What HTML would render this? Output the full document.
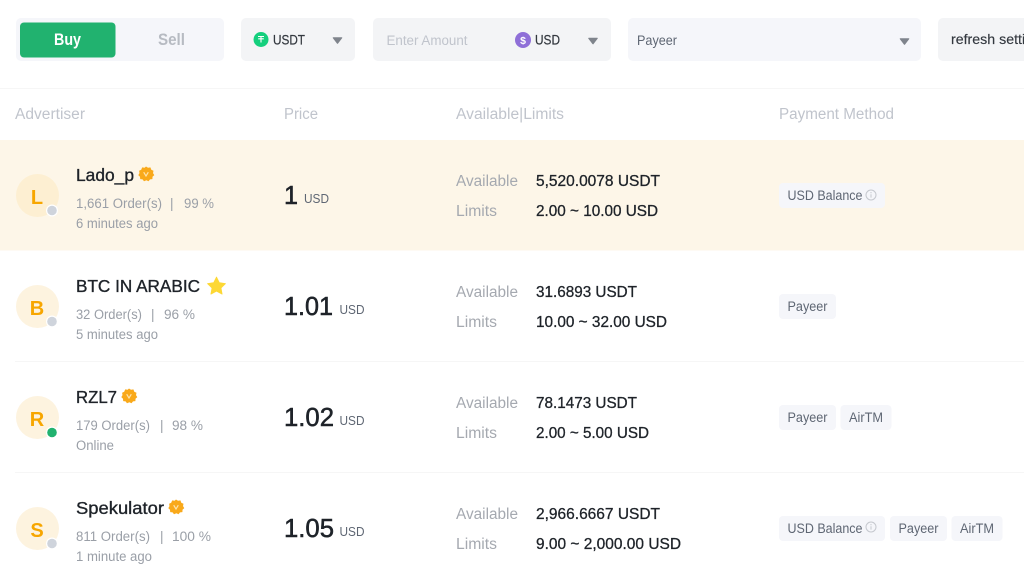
<!DOCTYPE html>
<html><head><meta charset="utf-8"><style>
html,body{margin:0;padding:0;width:1024px;height:574px;overflow:hidden;background:#fff}
svg{display:block;font-family:"Liberation Sans",sans-serif}
.h{fill:#c0c4cc;font-size:15.500px}.t{fill:#5e6673;font-size:13.500px}
.n{font-size:17.500px;fill:#1e2329;stroke:#1e2329;stroke-width:.35}.s{font-size:13.500px;fill:#9a9fa7}.a{font-size:20px;font-weight:bold;fill:#f7a600;text-anchor:middle}
.l{font-size:15.500px;fill:#a5a9b0}.v{font-size:15.500px;fill:#1e2329;stroke:#1e2329;stroke-width:.3}.p{font-size:26px;fill:#1e2329;stroke:#1e2329;stroke-width:.55}.u{font-size:12.500px;fill:#5e6673}
.c{fill:#f5f6fa}
</style></head><body>
<svg width="1024" height="574" viewBox="0 0 1024 574" xmlns="http://www.w3.org/2000/svg">
<defs>
<g id="ar"><path d="M.8 .8h8.400l-4.200 5.400z" fill="#7f848c" stroke="#7f848c" stroke-width="1.200" stroke-linejoin="round"/></g>
<g id="bd"><path d="M0-7.500l2 1.300 2.400-.4.900 2.300 2.200 1-.5 2.400 1.300 2-1.800 1.600-.1 2.400-2.400.3-1.500 1.900-2.100-1-2.400 1-1.400-1.900-2.400-.3-.2-2.400-1.700-1.600 1.200-2-.4-2.400 2.100-1 1-2.300 2.400.4z" fill="#f9a91a"/><path d="M-2.300-1.800L0 2l2.300-3.800" fill="none" stroke="#fde3ad" stroke-width="1.200"/></g>
<g id="inf"><circle r="5" fill="none" stroke="#c5c8ce" stroke-width="1"/><path d="M0-.8v3.400M0-3v1.200" stroke="#c5c8ce" stroke-width="1"/></g>
</defs>
<rect x="16" y="18" width="208" height="43" rx="5" fill="#f5f6fa"/>
<rect x="20" y="22.500" width="95.500" height="35" rx="4" fill="#21b26f"/>
<text x="54" y="45" font-size="16.500" font-weight="bold" fill="#fff" textLength="27" lengthAdjust="spacingAndGlyphs">Buy</text>
<text x="158" y="45" font-size="16.500" font-weight="bold" fill="#b7bbc2" textLength="27" lengthAdjust="spacingAndGlyphs">Sell</text>
<rect x="241" y="18" width="114" height="43" rx="5" fill="#f3f4f6"/>
<circle cx="261" cy="39.500" r="7.500" fill="#14cf7d"/>
<path d="M258 36.500h6M261 36.500v6M258.200 38.800h5.600" stroke="#fff" stroke-width="1.100" fill="none"/>
<text x="273" y="44.500" font-size="14" fill="#33383f" stroke="#33383f" stroke-width=".2" textLength="32" lengthAdjust="spacingAndGlyphs">USDT</text>
<use href="#ar" x="332.500" y="37"/>
<rect x="373" y="18" width="238" height="43" rx="5" fill="#f3f4f6"/>
<text x="386.500" y="45" font-size="13.500" fill="#c0c4cc" textLength="81" lengthAdjust="spacingAndGlyphs">Enter Amount</text>
<circle cx="523" cy="40" r="8" fill="#8f6fd8"/>
<text x="523" y="44" font-size="10.500" font-weight="bold" fill="#fff" text-anchor="middle">$</text>
<text x="535" y="44.500" font-size="14" fill="#33383f" stroke="#33383f" stroke-width=".2" textLength="25" lengthAdjust="spacingAndGlyphs">USD</text>
<use href="#ar" x="588" y="37.500"/>
<rect x="628" y="18" width="293" height="43" rx="5" fill="#f5f6fa"/>
<text x="637" y="45" font-size="14" fill="#5e6673" textLength="40" lengthAdjust="spacingAndGlyphs">Payeer</text>
<use href="#ar" x="899.500" y="38"/>
<rect x="938" y="18" width="100" height="43" rx="5" fill="#f3f4f6"/>
<text x="951" y="44" font-size="14" fill="#33383f" stroke="#33383f" stroke-width=".15" textLength="97" lengthAdjust="spacingAndGlyphs">refresh settings</text>
<rect x="0" y="88" width="1024" height="1" fill="#f6f6f6"/>
<text class="h" x="15" y="119" textLength="70" lengthAdjust="spacingAndGlyphs">Advertiser</text>
<text class="h" x="284" y="119" textLength="34" lengthAdjust="spacingAndGlyphs">Price</text>
<text class="h" x="456" y="119" textLength="108" lengthAdjust="spacingAndGlyphs">Available|Limits</text>
<text class="h" x="779" y="119" textLength="115" lengthAdjust="spacingAndGlyphs">Payment Method</text>

<rect x="0" y="140" width="1024" height="110.500" fill="#fdf6e8"/>
<rect x="15" y="361" width="1009" height="1" fill="#f6f6f6"/>
<rect x="15" y="472" width="1009" height="1" fill="#f6f6f6"/>

<!-- Row 1 -->
<circle cx="37.500" cy="195.500" r="21.500" fill="#fdefd2"/>
<text class="a" x="37" y="204">L</text>
<circle cx="52" cy="210.500" r="6" fill="#fff"/><circle cx="52" cy="210.500" r="4.800" fill="#cfd4dc"/>
<text class="n" x="76" y="181" textLength="58" lengthAdjust="spacingAndGlyphs">Lado_p</text>
<use href="#bd" x="146" y="174"/>
<text class="s" x="76" y="208" textLength="86" lengthAdjust="spacingAndGlyphs">1,661 Order(s)</text>
<text class="s" x="170" y="208">|</text>
<text class="s" x="184" y="208" textLength="30" lengthAdjust="spacingAndGlyphs">99 %</text>
<text class="s" x="76" y="228" textLength="82" lengthAdjust="spacingAndGlyphs">6 minutes ago</text>
<text class="p" x="284" y="204" textLength="14" lengthAdjust="spacingAndGlyphs">1</text>
<text class="u" x="304" y="203" textLength="25" lengthAdjust="spacingAndGlyphs">USD</text>
<text class="l" x="456" y="186" textLength="62" lengthAdjust="spacingAndGlyphs">Available</text>
<text class="v" x="536" y="186" textLength="124" lengthAdjust="spacingAndGlyphs">5,520.0078 USDT</text>
<text class="l" x="456" y="216" textLength="41" lengthAdjust="spacingAndGlyphs">Limits</text>
<text class="v" x="536" y="216" textLength="122" lengthAdjust="spacingAndGlyphs">2.00 ~ 10.00 USD</text>
<rect x="779" y="183" width="106" height="25" rx="4" class="c"/>
<text class="t" x="787.500" y="200" textLength="75" lengthAdjust="spacingAndGlyphs">USD Balance</text>
<use href="#inf" x="871" y="195"/>

<!-- Row 2 -->
<circle cx="37.500" cy="306.500" r="21.500" fill="#fdf3df"/>
<text class="a" x="37" y="315">B</text>
<circle cx="52" cy="321.500" r="6" fill="#fff"/><circle cx="52" cy="321.500" r="4.800" fill="#cfd4dc"/>
<text class="n" x="76" y="292" textLength="124" lengthAdjust="spacingAndGlyphs">BTC IN ARABIC</text>
<path d="M216.500 277l2.800 5.700 6.200.9-4.500 4.300 1.100 6.200-5.600-2.900-5.600 2.900 1.100-6.200-4.500-4.300 6.200-.9z" fill="#fdd835" stroke="#fdd835" stroke-width=".8" stroke-linejoin="round"/>
<text class="s" x="76" y="319" textLength="66" lengthAdjust="spacingAndGlyphs">32 Order(s)</text>
<text class="s" x="151" y="319">|</text>
<text class="s" x="164" y="319" textLength="31" lengthAdjust="spacingAndGlyphs">96 %</text>
<text class="s" x="76" y="339" textLength="82" lengthAdjust="spacingAndGlyphs">5 minutes ago</text>
<text class="p" x="284" y="315" textLength="49" lengthAdjust="spacingAndGlyphs">1.01</text>
<text class="u" x="339.500" y="314" textLength="25" lengthAdjust="spacingAndGlyphs">USD</text>
<text class="l" x="456" y="297" textLength="62" lengthAdjust="spacingAndGlyphs">Available</text>
<text class="v" x="536" y="297" textLength="101" lengthAdjust="spacingAndGlyphs">31.6893 USDT</text>
<text class="l" x="456" y="327" textLength="41" lengthAdjust="spacingAndGlyphs">Limits</text>
<text class="v" x="536" y="327" textLength="131" lengthAdjust="spacingAndGlyphs">10.00 ~ 32.00 USD</text>
<rect x="779" y="294" width="57" height="25" rx="4" class="c"/>
<text class="t" x="787.500" y="311" textLength="40" lengthAdjust="spacingAndGlyphs">Payeer</text>

<!-- Row 3 -->
<circle cx="37.500" cy="417.500" r="21.500" fill="#fdf3df"/>
<text class="a" x="37" y="426">R</text>
<circle cx="52" cy="432.500" r="6" fill="#fff"/><circle cx="52" cy="432.500" r="4.800" fill="#21b26f"/>
<text class="n" x="76" y="403" textLength="41" lengthAdjust="spacingAndGlyphs">RZL7</text>
<use href="#bd" x="129" y="396"/>
<text class="s" x="76" y="430" textLength="74" lengthAdjust="spacingAndGlyphs">179 Order(s)</text>
<text class="s" x="160" y="430">|</text>
<text class="s" x="172" y="430" textLength="31" lengthAdjust="spacingAndGlyphs">98 %</text>
<text class="s" x="76" y="450" textLength="38" lengthAdjust="spacingAndGlyphs">Online</text>
<text class="p" x="284" y="426" textLength="50" lengthAdjust="spacingAndGlyphs">1.02</text>
<text class="u" x="339.500" y="425" textLength="25" lengthAdjust="spacingAndGlyphs">USD</text>
<text class="l" x="456" y="408" textLength="62" lengthAdjust="spacingAndGlyphs">Available</text>
<text class="v" x="536" y="408" textLength="101" lengthAdjust="spacingAndGlyphs">78.1473 USDT</text>
<text class="l" x="456" y="438" textLength="41" lengthAdjust="spacingAndGlyphs">Limits</text>
<text class="v" x="536" y="438" textLength="113" lengthAdjust="spacingAndGlyphs">2.00 ~ 5.00 USD</text>
<rect x="779" y="405" width="57" height="25" rx="4" class="c"/>
<text class="t" x="787.500" y="422" textLength="40" lengthAdjust="spacingAndGlyphs">Payeer</text>
<rect x="840.500" y="405" width="51" height="25" rx="4" class="c"/>
<text class="t" x="849" y="422" textLength="34" lengthAdjust="spacingAndGlyphs">AirTM</text>

<!-- Row 4 -->
<circle cx="37.500" cy="528.500" r="21.500" fill="#fdf3df"/>
<text class="a" x="37" y="537">S</text>
<circle cx="52" cy="543.500" r="6" fill="#fff"/><circle cx="52" cy="543.500" r="4.800" fill="#cfd4dc"/>
<text class="n" x="76" y="514" textLength="88" lengthAdjust="spacingAndGlyphs">Spekulator</text>
<use href="#bd" x="176" y="507"/>
<text class="s" x="76" y="541" textLength="74" lengthAdjust="spacingAndGlyphs">811 Order(s)</text>
<text class="s" x="160" y="541">|</text>
<text class="s" x="172" y="541" textLength="39" lengthAdjust="spacingAndGlyphs">100 %</text>
<text class="s" x="76" y="561" textLength="76" lengthAdjust="spacingAndGlyphs">1 minute ago</text>
<text class="p" x="284" y="537" textLength="50" lengthAdjust="spacingAndGlyphs">1.05</text>
<text class="u" x="339.500" y="536" textLength="25" lengthAdjust="spacingAndGlyphs">USD</text>
<text class="l" x="456" y="519" textLength="62" lengthAdjust="spacingAndGlyphs">Available</text>
<text class="v" x="536" y="519" textLength="124" lengthAdjust="spacingAndGlyphs">2,966.6667 USDT</text>
<text class="l" x="456" y="549" textLength="41" lengthAdjust="spacingAndGlyphs">Limits</text>
<text class="v" x="536" y="549" textLength="145" lengthAdjust="spacingAndGlyphs">9.00 ~ 2,000.00 USD</text>
<rect x="779" y="516" width="106" height="25" rx="4" class="c"/>
<text class="t" x="787.500" y="533" textLength="75" lengthAdjust="spacingAndGlyphs">USD Balance</text>
<use href="#inf" x="871" y="527"/>
<rect x="890" y="516" width="57" height="25" rx="4" class="c"/>
<text class="t" x="898.500" y="533" textLength="40" lengthAdjust="spacingAndGlyphs">Payeer</text>
<rect x="951.500" y="516" width="51" height="25" rx="4" class="c"/>
<text class="t" x="960" y="533" textLength="34" lengthAdjust="spacingAndGlyphs">AirTM</text>
</svg>
</body></html>
